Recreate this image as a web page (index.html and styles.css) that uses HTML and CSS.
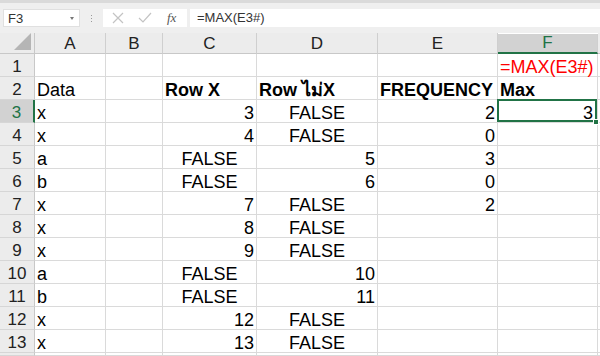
FILE: index.html
```html
<!DOCTYPE html>
<html lang="en">
<head>
    <meta charset="UTF-8">
    <title>Sheet</title>
    <link rel="stylesheet" href="styles.css">
</head>
<body>
<div class="formula-bar">
    <div class="name-box">
        <span>F3</span>
        <span class="caret"></span>
    </div>
    <div class="grip"><i></i><i></i><i></i></div>
    <div class="fx-box">
        <svg width="12" height="12" viewBox="0 0 12 12"><path d="M1 1 L11 11 M11 1 L1 11" stroke="#c3c3c3" stroke-width="1.2" fill="none"/></svg>
        <svg width="14" height="12" viewBox="0 0 14 12"><path d="M1 6 L5 10 L13 1" stroke="#c3c3c3" stroke-width="1.2" fill="none"/></svg>
        <span class="fx">fx</span>
    </div>
    <div class="formula">=MAX(E3#)</div>
</div>

<div class="sheet">
    <div class="corner"><span class="tri"></span></div>
    <div class="col-head">A</div>
    <div class="col-head">B</div>
    <div class="col-head">C</div>
    <div class="col-head">D</div>
    <div class="col-head">E</div>
    <div class="col-head active">F</div>
    <div class="col-head"></div>

    <div class="row-head">1</div>
    <div class="cell"></div><div class="cell"></div><div class="cell"></div><div class="cell"></div><div class="cell"></div>
    <div class="cell red">=MAX(E3#)</div><div class="cell"></div>

    <div class="row-head">2</div>
    <div class="cell">Data</div><div class="cell"></div>
    <div class="cell bold">Row X</div>
    <div class="cell bold">Row ไม่X</div>
    <div class="cell bold">FREQUENCY</div>
    <div class="cell bold">Max</div><div class="cell"></div>

    <div class="row-head active">3</div>
    <div class="cell">x</div><div class="cell"></div>
    <div class="cell num">3</div><div class="cell bool">FALSE</div><div class="cell num">2</div>
    <div class="cell num selected">3</div><div class="cell"></div>

    <div class="row-head">4</div>
    <div class="cell">x</div><div class="cell"></div>
    <div class="cell num">4</div><div class="cell bool">FALSE</div><div class="cell num">0</div>
    <div class="cell"></div><div class="cell"></div>

    <div class="row-head">5</div>
    <div class="cell">a</div><div class="cell"></div>
    <div class="cell bool">FALSE</div><div class="cell num">5</div><div class="cell num">3</div>
    <div class="cell"></div><div class="cell"></div>

    <div class="row-head">6</div>
    <div class="cell">b</div><div class="cell"></div>
    <div class="cell bool">FALSE</div><div class="cell num">6</div><div class="cell num">0</div>
    <div class="cell"></div><div class="cell"></div>

    <div class="row-head">7</div>
    <div class="cell">x</div><div class="cell"></div>
    <div class="cell num">7</div><div class="cell bool">FALSE</div><div class="cell num">2</div>
    <div class="cell"></div><div class="cell"></div>

    <div class="row-head">8</div>
    <div class="cell">x</div><div class="cell"></div>
    <div class="cell num">8</div><div class="cell bool">FALSE</div><div class="cell"></div>
    <div class="cell"></div><div class="cell"></div>

    <div class="row-head">9</div>
    <div class="cell">x</div><div class="cell"></div>
    <div class="cell num">9</div><div class="cell bool">FALSE</div><div class="cell"></div>
    <div class="cell"></div><div class="cell"></div>

    <div class="row-head">10</div>
    <div class="cell">a</div><div class="cell"></div>
    <div class="cell bool">FALSE</div><div class="cell num">10</div><div class="cell"></div>
    <div class="cell"></div><div class="cell"></div>

    <div class="row-head">11</div>
    <div class="cell">b</div><div class="cell"></div>
    <div class="cell bool">FALSE</div><div class="cell num">11</div><div class="cell"></div>
    <div class="cell"></div><div class="cell"></div>

    <div class="row-head">12</div>
    <div class="cell">x</div><div class="cell"></div>
    <div class="cell num">12</div><div class="cell bool">FALSE</div><div class="cell"></div>
    <div class="cell"></div><div class="cell"></div>

    <div class="row-head">13</div>
    <div class="cell">x</div><div class="cell"></div>
    <div class="cell num">13</div><div class="cell bool">FALSE</div><div class="cell"></div>
    <div class="cell"></div><div class="cell"></div>

    <!-- row 14, only its top edge shows -->
    <div class="row-head"></div>
    <div class="cell"></div><div class="cell"></div><div class="cell"></div><div class="cell"></div><div class="cell"></div>
    <div class="cell"></div><div class="cell"></div>
</div>
</body>
</html>
```

FILE: styles.css
```css
body {
    margin: 0;
    padding: 0;
    width: 600px;
    height: 356px;
    overflow: hidden;
    background-color: #efefef;
    font-family: "Liberation Sans", Arial, sans-serif;
}

/* formula bar */
.formula-bar {
    border-top: 3px solid #dadada;
    display: flex;
    align-items: flex-start;
    padding-top: 6px;
    box-sizing: border-box;
    height: 33px;
    font-size: 13px;
    color: #333;
}

.name-box {
    margin-left: 3px;
    width: 77px;
    height: 18px;
    background-color: white;
    border: 1px solid #e0e0e0;
    box-sizing: border-box;
    display: flex;
    align-items: center;
    justify-content: space-between;
    padding: 0 5px 0 4px;
}

.caret {
    width: 0;
    height: 0;
    border-left: 2.5px solid transparent;
    border-right: 2.5px solid transparent;
    border-top: 3px solid #777;
}

.grip {
    width: 23px;
    height: 18px;
    display: flex;
    flex-direction: column;
    align-items: center;
    justify-content: center;
    gap: 2px;
}

.grip i {
    width: 1px;
    height: 1px;
    background-color: #9a9a9a;
}

.fx-box {
    width: 84px;
    height: 18px;
    background-color: white;
    display: flex;
    align-items: center;
    padding-left: 9px;
    gap: 14px;
    box-sizing: border-box;
}

.fx {
    font-family: "Liberation Serif", serif;
    font-style: italic;
    font-size: 13px;
    color: #555;
    margin-left: 1px;
}

.formula {
    margin-left: 3px;
    flex: 1;
    height: 18px;
    background-color: white;
    line-height: 18px;
    padding-left: 7px;
}

/* grid */
.sheet {
    display: grid;
    grid-template-columns: 35px 71px 57px 94px 121px 120px 100px 1fr;
    grid-template-rows: 21px repeat(13, 23px) 3px;
    background-color: white;
    font-size: 18px;
    color: #000;
}

.corner,
.col-head,
.row-head {
    background-color: #ececec;
    color: #222;
    box-sizing: border-box;
    display: flex;
    align-items: flex-end;
    justify-content: center;
    line-height: 19px;
}

.corner {
    border-right: 1px solid #c8c8c8;
    border-bottom: 1px solid #c8c8c8;
    position: relative;
}

.tri {
    position: absolute;
    right: 3px;
    bottom: 3px;
    width: 0;
    height: 0;
    border-left: 17px solid transparent;
    border-bottom: 17px solid #b5b5b5;
}

.col-head {
    border-right: 1px solid #cfcfcf;
    border-bottom: 1px solid #c8c8c8;
    font-size: 17px;
}

.col-head.active {
    background-color: #d2d2d2;
    color: #217346;
    border-bottom: 2px solid #217346;
    margin-top: 1px;
}

.row-head {
    border-right: 1px solid #c8c8c8;
    border-bottom: 1px solid #d6d6d6;
    font-size: 17px;
    line-height: 18px;
    overflow: hidden;
}

.row-head.active {
    background-color: #d2d2d2;
    color: #217346;
    border-right: 2px solid #217346;
}

.cell {
    border-right: 1px solid #dadada;
    border-bottom: 1px solid #dadada;
    box-sizing: border-box;
    display: flex;
    align-items: flex-end;
    padding: 0 2px;
    line-height: 18px;
    white-space: nowrap;
}

.bold {
    font-weight: bold;
}

.red {
    color: #ff0000;
}

.num {
    justify-content: flex-end;
    padding-right: 2px;
}

.bool {
    justify-content: center;
}

.selected {
    position: relative;
    padding-right: 4px;
}

.selected::after {
    content: "";
    position: absolute;
    top: -1px;
    left: -1px;
    right: 0;
    bottom: 0;
    border: 2px solid #217346;
}

.selected::before {
    content: "";
    position: absolute;
    right: -2px;
    bottom: -3px;
    width: 4px;
    height: 4px;
    background-color: #217346;
    border: 1px solid white;
    z-index: 1;
}
```
